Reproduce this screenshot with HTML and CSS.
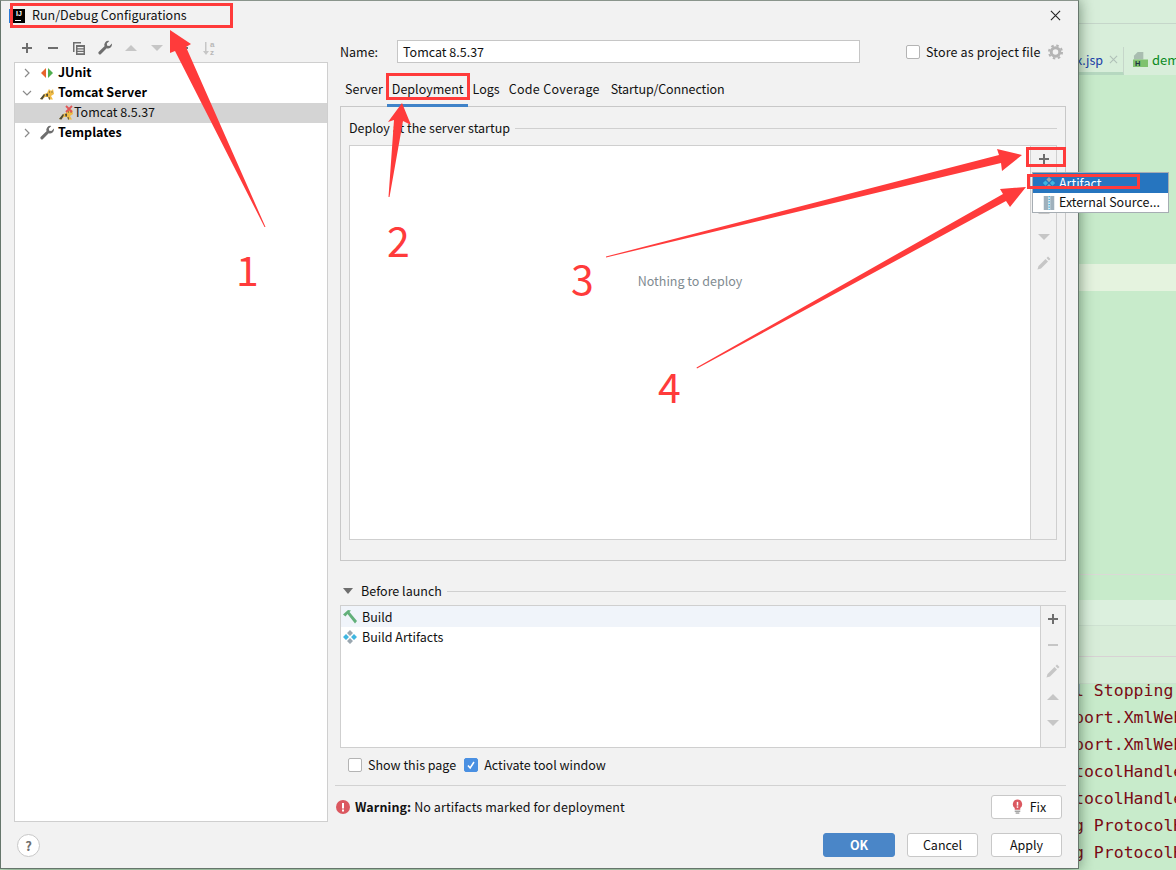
FILE: index.html
```html
<!DOCTYPE html>
<html lang="en">
<head>
<meta charset="utf-8">
<title>Run/Debug Configurations</title>
<link rel="stylesheet" href="styles.css">
</head>
<body>
<svg class="defs" width="0" height="0" aria-hidden="true">
  <symbol id="i-plus" viewBox="0 0 16 16"><path d="M7 3h2v4h4v2H9v4H7V9H3V7h4z"/></symbol>
  <symbol id="i-minus" viewBox="0 0 16 16"><rect x="3" y="7" width="10" height="2"/></symbol>
  <symbol id="i-copy" viewBox="0 0 16 16"><path d="M2 2h8v1.500H3.500V12H2z"/><path fill-rule="evenodd" d="M5 5h9v10H5zM6.500 7v1.200h6V7zM6.500 9.500v1.200h6V9.500zM6.500 12v1.200h6V12z"/></symbol>
  <symbol id="i-wrench" viewBox="0 0 16 16"><path d="M15 4.500a4 4 0 0 1-5.300 3.800L4 14a1.500 1.500 0 0 1-2.200-2.200l5.700-5.600A4 4 0 0 1 12.300 1L9.800 3.500l.4 2.200 2.200.4L15 3.500z"/></symbol>
  <symbol id="i-up" viewBox="0 0 16 16"><path d="M2 11l6-6 6 6z"/></symbol>
  <symbol id="i-down" viewBox="0 0 16 16"><path d="M2 5h12l-6 6z"/></symbol>
  <symbol id="i-pencil" viewBox="0 0 16 16"><path d="M12 1.500l2.500 2.500-1.500 1.500L10.500 3zM9.500 4l2.500 2.500-7 7-3.500 1 1-3.500z"/></symbol>
  <symbol id="i-artifact" viewBox="0 0 16 16"><path fill="#9aa7b0" d="M8 1l3 3-3 3-3-3zM8 9l3 3-3 3-3-3z"/><path fill="#40b6e0" d="M4 5l3 3-3 3-3-3zM12 5l3 3-3 3-3-3z"/></symbol>
  <symbol id="i-tomcat" viewBox="0 0 16 16"><path fill="#f0bb45" d="M1 14l4-5 3-1 2-4 1.300 1.500h1.500L14 4l1 5-3 2 2 3.500h-4L9 12H6l-3 2.500z"/><path fill="#4b4b3c" d="M1 14l4-5 1 1-2.500 4.500zM10 6.500h1v1h-1zM12.500 6.500h1v1h-1zM7 9l2-.5v3H7.500zM9.500 12h1l.5 2.500h-1z"/></symbol>
  <symbol id="i-hammer" viewBox="0 0 16 16"><path fill="#62b07a" d="M1 5.500L6 1l3 .5-1.500 1.500L15 12l-2 2.500L5.500 5 3.500 7.500z"/></symbol>
</svg>

<div class="page">
  <section class="dialog">
    <header class="titlebar">
      <span class="logo"><span class="logo-text">IJ</span><span class="logo-bar"></span></span>
      <span class="title-text">Run/Debug Configurations</span>
      <svg class="close" viewBox="0 0 12 12"><path d="M1 1l10 10M11 1L1 11"/></svg>
    </header>

    <div class="main">
      <aside class="sidebar">
        <div class="tools">
          <svg class="ic dark"><use href="#i-plus"/></svg>
          <svg class="ic dark"><use href="#i-minus"/></svg>
          <svg class="ic dark"><use href="#i-copy"/></svg>
          <svg class="ic dark"><use href="#i-wrench"/></svg>
          <svg class="ic light"><use href="#i-up"/></svg>
          <svg class="ic light"><use href="#i-down"/></svg>
          <svg class="ic dark"><use href="#i-plus"/></svg>
          <svg class="ic light" viewBox="0 0 16 16"><path d="M4 2h1.500v9H8l-3 4-3-4h2z"/><text class="sort-a" x="9" y="7">a</text><text class="sort-a" x="9" y="15">z</text></svg>
        </div>
        <ul class="tree">
          <li class="row strong"><svg class="chev" viewBox="0 0 10 10"><path d="M3 1l4 4-4 4"/></svg>
            <svg class="ic16" viewBox="0 0 16 16"><path fill="#e8642c" d="M7 3v10L2 8z"/><path fill="#4fae4e" d="M9 3v10l5-5z"/></svg><span>JUnit</span></li>
          <li class="row strong"><svg class="chev" viewBox="0 0 10 10"><path d="M1 3l4 4 4-4"/></svg>
            <svg class="ic16"><use href="#i-tomcat"/></svg><span>Tomcat Server</span></li>
          <li class="row child selected">
            <svg class="ic16" viewBox="0 0 16 16"><use href="#i-tomcat"/><path d="M8 1l6 6M14 1L8 7" stroke="#e05555" stroke-width="1.800" fill="none"/></svg><span>Tomcat 8.5.37</span></li>
          <li class="row strong"><svg class="chev" viewBox="0 0 10 10"><path d="M3 1l4 4-4 4"/></svg>
            <svg class="ic16 dark"><use href="#i-wrench"/></svg><span>Templates</span></li>
        </ul>
      </aside>

      <section class="content">
        <div class="name-row">
          <label class="name-label">Name:</label>
          <div class="name-input">Tomcat 8.5.37</div>
          <span class="store"><span class="check"></span><span class="store-text">Store as project file</span>
            <svg class="gear" viewBox="0 0 16 16"><circle cx="7.500" cy="8" r="4.300" fill="none" stroke="#b4b4b4" stroke-width="3"/><circle cx="7.500" cy="8" r="6.500" fill="none" stroke="#b4b4b4" stroke-width="2" stroke-dasharray="2.500 2.600"/></svg>
          </span>
        </div>

        <nav class="tabs">
          <span class="tab first">Server</span>
          <span class="tab active">Deployment</span>
          <span class="tab">Logs</span>
          <span class="tab wide">Code Coverage</span>
          <span class="tab last">Startup/Connection</span>
        </nav>

        <div class="panel">
          <div class="legend"><span>Deploy at the server startup</span><span class="rule"></span></div>
          <div class="deploy-list">
            <div class="empty">Nothing to deploy</div>
            <div class="side-tools">
              <svg class="ic dark"><use href="#i-plus"/></svg>
              <svg class="ic light"><use href="#i-minus"/></svg>
              <svg class="ic light"><use href="#i-up"/></svg>
              <svg class="ic light"><use href="#i-down"/></svg>
              <svg class="ic light"><use href="#i-pencil"/></svg>
            </div>
          </div>
        </div>

        <div class="legend before"><svg class="tri" viewBox="0 0 10 6"><path d="M0 0h10L5 6z"/></svg><span>Before launch</span><span class="rule"></span></div>
        <div class="launch-list">
          <ul class="launch-rows">
            <li class="launch-row hl"><svg class="ic16"><use href="#i-hammer"/></svg><span>Build</span></li>
            <li class="launch-row"><svg class="ic16"><use href="#i-artifact"/></svg><span>Build Artifacts</span></li>
          </ul>
          <div class="side-tools narrow">
            <svg class="ic dark"><use href="#i-plus"/></svg>
            <svg class="ic light"><use href="#i-minus"/></svg>
            <svg class="ic light"><use href="#i-pencil"/></svg>
            <svg class="ic light"><use href="#i-up"/></svg>
            <svg class="ic light"><use href="#i-down"/></svg>
          </div>
        </div>

        <div class="options">
          <span class="check"></span><span class="opt-text">Show this page</span>
          <span class="check on"><svg viewBox="0 0 14 14"><path d="M3.500 7.500l2.500 3 4.500-7"/></svg></span><span>Activate tool window</span>
        </div>
        <div class="separator"></div>
        <div class="warning-row">
          <span class="warning">
            <svg class="warn-ic" viewBox="0 0 14 14"><circle cx="7" cy="7" r="7"/><rect class="wh" x="6" y="3" width="2" height="5.500"/><rect class="wh" x="6" y="9.500" width="2" height="2"/></svg>
            <span class="warn-text"><b>Warning:</b> No artifacts marked for deployment</span>
          </span>
          <button class="btn fix"><svg class="bulb" viewBox="0 0 14 16"><path d="M7 0a5 5 0 0 1 3 9v2H4V9a5 5 0 0 1 3-9z"/><rect class="wh" x="6.200" y="2.500" width="1.600" height="4"/><rect class="wh" x="6.200" y="7.300" width="1.600" height="1.600"/><path class="bl" d="M4 12.500h6M5 14.500h4"/></svg>Fix</button>
        </div>
      </section>
    </div>

    <footer class="footer">
      <span class="help">?</span>
      <span class="buttons">
        <button class="btn primary">OK</button>
        <button class="btn">Cancel</button>
        <button class="btn apply">Apply</button>
      </span>
    </footer>
  </section>

  <div class="ide">
    <div class="ide-top"></div>
    <div class="ide-row24"></div>
    <div class="ide-tabs">
      <span class="ide-tab"><span class="jsp">x.jsp</span><svg class="tab-x" viewBox="0 0 10 10"><path d="M1 1l8 8M9 1L1 9"/></svg></span>
      <span class="ide-tab2"><svg class="html-ic" viewBox="0 0 16 16"><path fill="#a9bdb0" d="M5 0h6v8H1V4z"/><rect y="8" width="16" height="8" fill="#7fc26e"/><text class="h-text" x="2" y="15">H</text></svg><span class="dem">dem</span></span>
    </div>
    <div class="ide-green h189"></div>
    <div class="ide-band h27"></div>
    <div class="ide-green h284"></div>
    <div class="ide-green h25"></div>
    <div class="ide-band2 h26"></div>
    <div class="ide-band3 h31"></div>
    <div class="ide-band3 h27b"></div>
    <div class="console">
      <div>l Stopping</div>
      <div>port.XmlWeb</div>
      <div>port.XmlWeb</div>
      <div>tocolHandle</div>
      <div>tocolHandle</div>
      <div>g ProtocolH</div>
      <div>g ProtocolH</div>
    </div>
  </div>

  <div class="popup">
    <div class="pop-item sel"><svg class="ic16"><use href="#i-artifact"/></svg><span>Artifact...</span></div>
    <div class="pop-item"><svg class="ic16" viewBox="0 0 16 16"><rect x="2" y="0" width="12" height="16" fill="#9fb0bc"/><rect x="7" y="0" width="2.500" height="16" fill="#d8ecf4"/><path d="M8.200 0v16" stroke="#3fa8d8" stroke-width="1.500" stroke-dasharray="1.500 1.500"/></svg><span>External Source...</span></div>
  </div>

  <svg class="notes" viewBox="0 0 1176 870">
    <rect class="box" x="11.500" y="4.500" width="220" height="22"/>
    <rect class="box" x="387.500" y="74.500" width="81" height="24"/>
    <rect class="box" x="1027.500" y="148.500" width="37" height="17"/>
    <rect class="box" x="1028.500" y="175.500" width="110" height="12"/>
    <polygon class="arrow" points="170,30 191,44 186,47 265.500,227 264.500,227 175,51 170,53"/>
    <polygon class="arrow" points="402,103 411,125 403,121 389.500,197 388.500,197 394,120 388,122"/>
    <polygon class="arrow" points="1022,155 1002,171 1001,163 606,257.500 606,256.500 999,155 997,149"/>
    <polygon class="arrow" points="1026,187 1010,207 1006,201 697,368.500 696.500,367.500 1003,194 1000,189"/>
    <text class="num" x="236" y="286">1</text>
    <text class="num" x="387" y="257">2</text>
    <text class="num" x="571" y="295">3</text>
    <text class="num" x="658" y="403">4</text>
  </svg>
</div>
</body>
</html>
```

FILE: styles.css
```css
* { box-sizing: border-box; }
html, body { margin: 0; padding: 0; }
body {
  width: 1176px;
  height: 870px;
  overflow: hidden;
  background: #c8ebcb;
  font-family: "Noto Sans CJK SC", "Noto Sans", sans-serif;
  font-size: 12.500px;
  line-height: 18px;
  color: #111;
}
ul { list-style: none; margin: 0; padding: 0; }
.defs { position: absolute; }
.page { position: relative; display: flex; width: 1176px; height: 870px; overflow: hidden; }

/* dialog */
.dialog {
  position: relative;
  z-index: 2;
  flex: none;
  width: 1079px;
  height: 869px;
  display: flex;
  flex-direction: column;
  background: #f2f2f2;
  border: 1px solid #66766c;
  border-top-color: #8a958c;
  box-shadow: 0 0 14px rgba(20, 50, 25, .55);
}
.titlebar { flex: none; height: 29px; display: flex; align-items: center; padding: 0 17px 0 12px; }
.logo { position: relative; width: 12px; height: 14px; background: #000; flex: none; margin-right: 7px; box-shadow: -4px 0 0 0 #2a7bd8; }
.logo-text { display: block; color: #fff; font: bold 7px/9px "Liberation Sans", sans-serif; text-align: center; }
.logo-bar { position: absolute; left: 2px; bottom: 2px; width: 6px; height: 1px; background: #fff; }
.title-text { flex: 1; line-height: 16px; padding-bottom: 2px; }
.close { width: 11px; height: 11px; fill: none; stroke: #222; stroke-width: 1.2; }

.main { flex: none; height: 792px; display: flex; }

/* left */
.sidebar { flex: none; width: 314px; margin-left: 13px; display: flex; flex-direction: column; }
.tools { flex: none; height: 32px; display: flex; align-items: flex-end; gap: 10px; padding: 0 0 6px 5px; }
.ic { width: 16px; height: 16px; flex: none; }
.dark { fill: #6e6e6e; }
.light { fill: #c6c6c6; }
.sort-a { font: bold 8px "Liberation Sans", sans-serif; fill: #b8b8b8; }
.tree { flex: 1; background: #fff; border: 1px solid #cfcfcf; }
.row { height: 20px; display: flex; align-items: center; padding-left: 7px; line-height: 18px; }
.row span { padding-bottom: 2px; }
.chev { width: 10px; height: 10px; fill: none; stroke: #8a8a8a; stroke-width: 1.2; margin-right: 7px; flex: none; }
.ic16 { width: 16px; height: 16px; flex: none; }
.row .ic16 { margin-right: 3px; }
.strong { font-weight: 700; color: #000; }
.child { padding-left: 43px; }
.child .ic16 { margin-right: 0; }
.selected { background: #d4d4d4; }

/* right */
.content { flex: none; width: 726px; margin-left: 12px; display: flex; flex-direction: column; }
.name-row { flex: none; display: flex; align-items: center; height: 23px; margin-top: 10px; }
.name-label { width: 57px; }
.name-input { width: 463px; height: 23px; background: #fff; border: 1px solid #c6c6c6; padding-left: 5px; line-height: 21px; }
.store { display: flex; align-items: center; margin-left: 46px; }
.store .check { margin-right: 6px; }
.store-text { letter-spacing: .15px; }
.gear { width: 16px; height: 16px; margin-left: 7px; }
.check { display: inline-flex; width: 14px; height: 14px; background: #fff; border: 1px solid #b4b4b4; border-radius: 2px; flex: none; }
.check.on { background: #4a90e2; border-color: #4a90e2; }
.check.on svg { width: 12px; height: 12px; fill: none; stroke: #fff; stroke-width: 1.8; }

.tabs { flex: none; display: flex; height: 26px; margin-top: 17px; padding-left: 0; }
.tab { padding: 0 4.500px; line-height: 17px; height: 27px; }
.tab.first { padding-left: 5px; }
.tab.wide { letter-spacing: .3px; }
.tab.last { margin-left: 2px; letter-spacing: -.1px; }
.tab.active { border-bottom: 3px solid #4083c9; position: relative; z-index: 1; }

.panel { flex: none; height: 455px; border: 1px solid #c8c8c8; padding: 12px 8px 0; }
.legend { display: flex; align-items: center; height: 18px; }
.rule { flex: 1; height: 1px; background: #d0d0d0; margin-left: 5px; }
.deploy-list { display: flex; height: 395px; margin-top: 8px; background: #fff; border: 1px solid #cfcfcf; }
.empty { flex: 1; text-align: center; padding-top: 126px; color: #7f8b91; }
.side-tools { flex: none; width: 26px; display: flex; flex-direction: column; align-items: center; gap: 10px; padding-top: 5px; background: #f2f2f2; border-left: 1px solid #cfcfcf; }
.side-tools.narrow { width: 25px; padding-top: 5px; }

.before { margin-top: 21px; }
.tri { width: 10px; height: 6px; fill: #6e6e6e; margin: 0 8px 0 3px; }
.launch-list { flex: none; display: flex; height: 143px; margin-top: 5px; background: #fff; border: 1px solid #cfcfcf; }
.launch-rows { flex: 1; }
.launch-row { height: 20px; display: flex; align-items: center; gap: 4px; padding-left: 1px; }
.launch-row.hl { height: 21px; background: #f0f4fa; }
.options { flex: none; height: 18px; margin-top: 8px; padding-left: 8px; display: flex; align-items: center; gap: 6px; }
.opt-text { margin-right: 2px; }
.separator { flex: none; height: 1px; margin: 11px 0 0 -5px; background: #d2d2d2; }
.warning-row { flex: none; height: 24px; margin-top: 9px; padding-right: 4px; display: flex; justify-content: space-between; align-items: center; }
.warning { display: inline-flex; align-items: center; margin-left: -4px; }
.warn-ic { width: 14px; height: 14px; fill: #db5860; margin-right: 5px; flex: none; }
.wh { fill: #fff; }
.warn-text { letter-spacing: .1px; }
.warn-text b { font-weight: 700; }

.btn {
  width: 71px;
  height: 24px;
  padding: 0;
  display: inline-flex;
  align-items: center;
  justify-content: center;
  font: inherit;
  color: #111;
  background: #fff;
  border: 1px solid #c8c8c8;
  border-radius: 3px;
}
.primary { background: #4a86c8; border-color: #4a86c8; color: #fff; font-weight: 700; width: 72px; }
.fix { gap: 6px; padding-left: 4px; }
.bulb { width: 13px; height: 16px; fill: #db5860; }
.bl { fill: none; stroke: #6e6e6e; stroke-width: 1; }

.footer { flex: none; display: flex; justify-content: space-between; align-items: center; height: 46px; padding: 0 15px 0 16px; }
.help { width: 23px; height: 23px; border-radius: 50%; background: #fff; border: 1px solid #c8c8c8; text-align: center; font-weight: 700; font-size: 13px; line-height: 21px; color: #6e6e6e; }
.buttons { display: flex; gap: 12px; margin-right: 1px; }
.apply { margin-left: 1px; }

/* ide behind */
.ide { flex: 1; min-width: 0; overflow: hidden; position: relative; background: #c8ebcb; }
.ide-top { height: 24px; background: #d8eeda; border-bottom: 1px solid #c6d6ca; }
.ide-row24 { height: 23px; background: #d8eeda; }
.ide-tabs { height: 28px; display: flex; background: #d8eeda; margin-left: -5px; }
.ide-tab { flex: none; width: 50px; padding-left: 2px; display: flex; align-items: center; gap: 6px; height: 28px; border-right: 1px solid #c6d6ca; border-bottom: 3px solid #b6d8c0; font-size: 12.500px; color: #2040a8; white-space: nowrap; }
.tab-x { width: 9px; height: 9px; fill: none; stroke: #b0c0b8; stroke-width: 1.2; }
.ide-tab2 { display: flex; align-items: center; gap: 4px; padding-left: 9px; font-size: 13px; color: #0a8a1e; white-space: nowrap; height: 25px; }
.html-ic { width: 15px; height: 15px; flex: none; }
.h-text { font: bold 8px "Liberation Sans", sans-serif; fill: #234; }
.ide-green { background: #c8ebcb; }
.h189 { height: 189px; }
.h27 { height: 27px; }
.h284 { height: 284px; border-bottom: 1px solid #dbd9d6; }
.h25 { height: 25px; }
.h26 { height: 26px; border-bottom: 1px solid #cfe2d2; }
.h31 { height: 31px; border-bottom: 1px solid #d8d2d4; }
.h27b { height: 27px; border-bottom: 1px solid #cfe0d0; }
.ide-band { background: #e5f3df; }
.ide-band2 { background: #dcf0de; }
.ide-band3 { background: #d8edd9; }
.console {
  margin: -7px 0 0 -5px;
  font-family: "DejaVu Sans Mono", monospace;
  font-size: 16.500px;
  line-height: 27px;
  color: #7a0a14;
  white-space: nowrap;
}

/* overlays */
.popup {
  position: absolute;
  z-index: 3;
  left: 1032px;
  top: 172px;
  width: 137px;
  height: 41px;
  background: #fff;
  border: 1px solid #a6adb3;
}
.pop-item { height: 19px; display: flex; align-items: center; gap: 3px; padding-left: 7px; line-height: 17px; }
.pop-item span { padding-bottom: 2px; }
.pop-item .ic16 { width: 14px; height: 14px; margin-left: 2px; }
.pop-item.sel { background: #2675bf; color: #fff; height: 20px; }
.notes { position: absolute; z-index: 4; left: 0; top: 0; width: 1176px; height: 870px; pointer-events: none; }
.box { fill: none; stroke: #ff3b3b; stroke-width: 3; }
.arrow { fill: #ff3b3b; }
.num { font-family: "Noto Sans CJK SC", sans-serif; font-weight: 400; font-size: 41px; fill: #ff3b3b; }
```
